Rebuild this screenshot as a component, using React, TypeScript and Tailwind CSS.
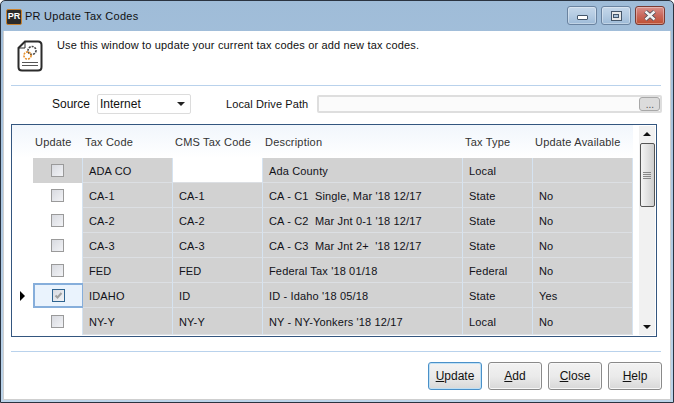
const font = "[font-family:'Liberation_Sans',Arial,sans-serif]";

const rows = [
  ["ADA CO", "", "Ada County", "Local", ""],
  ["CA-1", "CA-1", "CA - C1  Single, Mar '18 12/17", "State", "No"],
  ["CA-2", "CA-2", "CA - C2  Mar Jnt 0-1 '18 12/17", "State", "No"],
  ["CA-3", "CA-3", "CA - C3  Mar Jnt 2+  '18 12/17", "State", "No"],
  ["FED", "FED", "Federal Tax '18 01/18", "Federal", "No"],
  ["IDAHO", "ID", "ID - Idaho '18 05/18", "State", "Yes"],
  ["NY-Y", "NY-Y", "NY - NY-Yonkers '18 12/17", "Local", "No"],
];

const gridCols = "grid grid-cols-[21px_50px_90px_90px_200px_70px_100px]";

function Check({ checked }: { checked?: boolean }) {
  return (
    <span
      className={`flex h-[13px] w-[13px] items-center justify-center border bg-gradient-to-br from-[#d8dae0] to-[#f2f3f6] ${
        checked ? "border-[#2f6490]" : "border-[#9a9a9a]"
      }`}
    >
      {checked && (
        <svg width="9" height="9" viewBox="0 0 9 9">
          <path d="M1.5 4.5 L3.5 6.5 L7.5 2" fill="none" stroke="#a0a0a0" strokeWidth="2" />
        </svg>
      )}
    </span>
  );
}

function Btn({ u, post, active }: { u: string; post: string; active?: boolean }) {
  return (
    <button
      className={`flex h-[28px] w-[54px] items-center justify-center rounded-[3px] border bg-gradient-to-b from-[#f2f2f2] via-[#ebebeb] to-[#d8d8d8] text-[12px] text-[#111] ${
        active ? "border-[#4a90c8] shadow-[inset_0_0_0_1px_#bfe0f5]" : "border-[#8a8a8a] shadow-[inset_0_0_0_1px_#f8f8f8]"
      }`}
    >
      <span className="underline">{u}</span>
      {post}
    </button>
  );
}

function WinBtn({ className, children }: { className: string; children: React.ReactNode }) {
  return (
    <div className={`flex h-[19px] w-[30px] items-center justify-center rounded-[3px] border shadow-[inset_0_0_0_1px_rgba(255,255,255,0.35)] ${className}`}>
      {children}
    </div>
  );
}

export default function App() {
  return (
    <div className={`flex h-[403px] w-[674px] flex-col rounded-t-[5px] border border-[#2a3340] bg-gradient-to-b from-[#9fbcd8] to-[#bcd4ea] ${font} text-[11px] text-[#111]`}>
      <div className="flex h-[30px] shrink-0 items-center pl-[5px]">
        <div className="mt-[1px] flex h-[16px] w-[16px] items-center justify-center rounded-[2px] border border-[#c9822f] bg-[#2b2b2b] text-[9px] font-bold leading-none text-white">
          PR
        </div>
        <span className="ml-[3px] text-[11px] tracking-[0.25px] text-[#111]">PR Update Tax Codes</span>
        <div className="ml-auto mr-[8px] flex gap-[4px] pb-[1px]">
          <WinBtn className="border-[#6a83a0] bg-gradient-to-b from-[#c5d7ea] via-[#b4cbe2] to-[#9ebbd8]">
            <span className="mt-[3px] h-[5px] w-[11px] rounded-[1px] border border-[#44566a] bg-white" />
          </WinBtn>
          <WinBtn className="border-[#6a83a0] bg-gradient-to-b from-[#c5d7ea] via-[#b4cbe2] to-[#9ebbd8]">
            <span className="flex h-[10px] w-[11px] items-center justify-center border border-[#44566a] bg-[#e8e8e8]">
              <span className="h-[4px] w-[6px] border border-[#44566a] bg-[#a9c2da]" />
            </span>
          </WinBtn>
          <WinBtn className="border-[#7a3a32] bg-gradient-to-b from-[#d9908a] via-[#c9685c] to-[#bf4f2f]">
            <svg width="14" height="11" viewBox="0 0 14 11">
              <path d="M2.5 1.5 L11.5 9.5 M11.5 1.5 L2.5 9.5" stroke="#3f4a55" strokeWidth="4" />
              <path d="M2.5 1.5 L11.5 9.5 M11.5 1.5 L2.5 9.5" stroke="#f2f2f2" strokeWidth="2.4" />
            </svg>
          </WinBtn>
        </div>
      </div>
      <div className="mx-[2px] mb-[2px] flex min-h-0 flex-1 flex-col border-x border-b border-[#cfcfcf] bg-white">
        <div className="flex h-[54px] shrink-0 pl-[13px]">
          <svg width="26" height="32" viewBox="0 0 26 32" className="mt-[9px] shrink-0">
            <path d="M8 1.5 H21 Q24.5 1.5 24.5 5 V27 Q24.5 30.5 21 30.5 H5 Q1.5 30.5 1.5 27 V8 Z" fill="#fff" stroke="#2b2b2b" strokeWidth="2" />
            <path d="M8 2 V8 H2" fill="none" stroke="#2b2b2b" strokeWidth="1" />
            <circle cx="15" cy="10.5" r="4" fill="none" stroke="#444" strokeWidth="1.6" strokeDasharray="2 1" />
            <circle cx="10.5" cy="15.5" r="3.6" fill="none" stroke="#e8912c" strokeWidth="1.6" strokeDasharray="2 1" />
            <path d="M5 22.5 H21 M5 25.5 H21" stroke="#555" strokeWidth="1" />
          </svg>
          <span className="ml-[14px] mt-[6px] tracking-[0.16px]">
            Use this window to update your current tax codes or add new tax codes.
          </span>
        </div>
        <div className="ml-[7px] mr-[9px] h-px shrink-0 bg-[#b9d2ec]" />
        <div className="flex h-[36px] shrink-0 items-center">
          <span className="ml-[48px] text-[12px]">Source</span>
          <div className="ml-[7px] flex h-[20px] w-[94px] items-center justify-between rounded-[2px] border border-[#dcdcdc] pl-[2px] pr-[5px] text-[12px]">
            <span>Internet</span>
            <span className="h-0 w-0 border-x-[4px] border-t-[4px] border-x-transparent border-t-[#222]" />
          </div>
          <span className="ml-[35px] tracking-[0.1px]">Local Drive Path</span>
          <div className="ml-[9px] flex h-[18px] w-[345px] items-center justify-end rounded-[2px] border-2 border-[#dedede] bg-[#fbfbfb]">
            <span className="flex h-[14px] w-[21px] items-end justify-center rounded-[3px] border border-[#a8a8a8] bg-[#dcdcdc] text-[10px] leading-[10px] text-[#555]">
              ...
            </span>
          </div>
        </div>
        <div className="ml-[7px] mr-[13px] mt-[2px] flex h-[213px] shrink-0 border border-[#34567f]">
          <div className="w-[621px] shrink-0">
            <div className={`${gridCols} h-[33px] items-center bg-gradient-to-b from-[#f1f6fc] to-white pt-[2px] text-[#333] tracking-[0.2px]`}>
              <span />
              <span className="pl-[2px]">Update</span>
              <span className="pl-[2px]">Tax Code</span>
              <span className="pl-[2px]">CMS Tax Code</span>
              <span className="pl-[2px]">Description</span>
              <span className="pl-[2px]">Tax Type</span>
              <span className="pl-[2px]">Update Available</span>
            </div>
            {rows.map((r, i) => (
              <div key={r[0]} className={`${gridCols} ${i === 6 ? "h-[27px]" : "h-[25px]"} text-[#111118]`}>
                <span className="flex items-center justify-end">
                  {i === 5 && <span className="mr-[8px] h-0 w-0 border-y-[5px] border-l-[5px] border-y-transparent border-l-black" />}
                </span>
                <div
                  className={`flex items-center justify-center border-r ${
                    i === 0 ? "border-[#d5e3f1] bg-[#d2d2d2]" : i === 5 ? "border-[2px] !border-[#86aedb] bg-[#eaf3fd]" : "border-[#d5e3f1] bg-white"
                  }`}
                >
                  <Check checked={i === 5} />
                </div>
                {r.map((c, j) => (
                  <div
                    key={j}
                    className={`flex items-center whitespace-pre border-b border-r border-b-[#dcdfe3] border-r-[#d5e3f1] pl-[6px] pt-[2px] tracking-[0.15px] ${
                      i === 0 && j === 1 ? "bg-white" : "bg-[#d2d2d2]"
                    }`}
                  >
                    {c}
                  </div>
                ))}
              </div>
            ))}
          </div>
          <div className="my-px ml-auto mr-px flex w-[16px] shrink-0 flex-col items-center bg-[#f1f1f1]">
            <span className="mt-[6px] h-0 w-0 border-x-[4px] border-b-[4px] border-x-transparent border-b-[#111]" />
            <div className="mt-[7px] flex h-[64px] w-[15px] flex-col items-center justify-center gap-[1px] rounded-[2px] border border-[#555] bg-gradient-to-r from-[#f4f4f4] to-[#cfcfcf]">
              <span className="h-px w-[8px] bg-[#888]" />
              <span className="h-px w-[8px] bg-[#888]" />
              <span className="h-px w-[8px] bg-[#888]" />
              <span className="h-px w-[8px] bg-[#888]" />
            </div>
            <span className="mb-[6px] mt-auto h-0 w-0 border-x-[4px] border-t-[4px] border-x-transparent border-t-[#111]" />
          </div>
        </div>
        <div className="ml-[7px] mr-[9px] mt-[14px] h-px shrink-0 bg-[#b9d2ec]" />
        <div className="flex flex-1 items-center justify-end gap-[6px] pr-[8px]">
          <Btn u="U" post="pdate" active />
          <Btn u="A" post="dd" />
          <Btn u="C" post="lose" />
          <Btn u="H" post="elp" />
        </div>
      </div>
    </div>
  );
}
